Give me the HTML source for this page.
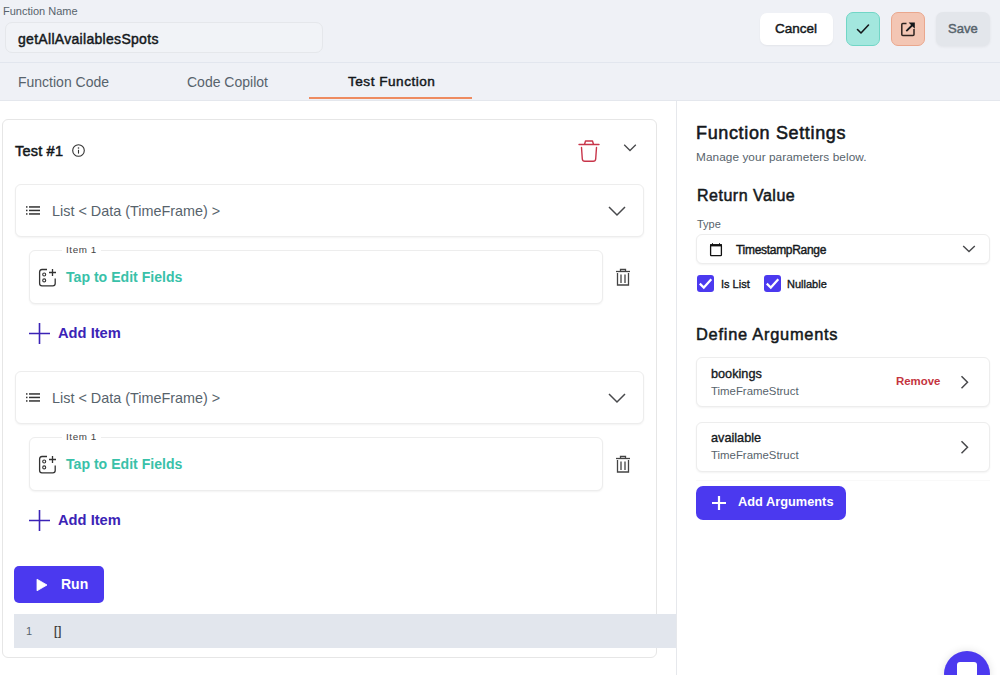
<!DOCTYPE html>
<html><head><meta charset="utf-8">
<style>
*{box-sizing:border-box;margin:0;padding:0}
html,body{width:1000px;height:675px;overflow:hidden;background:#fff;font-family:"Liberation Sans",sans-serif;color:#14181b}
.abs{position:absolute}
svg{position:absolute;overflow:visible}
#hdr{position:absolute;left:0;top:0;width:1000px;height:100px;background:#eff1f6}
#hdrline{position:absolute;left:0;top:62px;width:1000px;height:1px;background:#e2e6ee}
#tabline{position:absolute;left:0;top:100px;width:1000px;height:1px;background:#e4e7ed}
.txt{position:absolute;white-space:nowrap;line-height:1}
#fninput{position:absolute;left:5px;top:22px;width:318px;height:31px;background:#f1f3f7;border:1px solid #e5e7eb;border-radius:7px}
.btn{position:absolute;border-radius:7px}
#vdiv{position:absolute;left:676px;top:101px;width:1px;height:574px;background:#e6e8ec}
#card{position:absolute;left:2px;top:119px;width:655px;height:539px;border:1px solid #e6e6e6;border-radius:6px;background:#fff}
.box{position:absolute;border:1px solid #ededed;border-radius:6px;background:#fff;box-shadow:0 1px 2px rgba(0,0,0,0.05)}
.ilbl{position:absolute;background:#fff;padding:0 4px;font-size:9.8px;letter-spacing:0.6px;color:#444;line-height:1;white-space:nowrap}
</style></head>
<body>
<div id="hdr"></div>
<div id="hdrline"></div>
<div class="txt" style="left:3px;top:6px;font-size:11px;color:#57636c">Function Name</div>
<div id="fninput"></div>
<div class="txt" style="left:18px;top:32px;font-size:14px;-webkit-text-stroke:0.45px #14181b;letter-spacing:0.3px">getAllAvailablesSpots</div>

<div class="btn" style="left:760px;top:13px;width:73px;height:32px;background:#fff;box-shadow:0 1px 2px rgba(0,0,0,0.05)"></div>
<div class="txt" style="left:775px;top:22px;font-size:13.5px;-webkit-text-stroke:0.45px #14181b;letter-spacing:0px">Cancel</div>
<div class="btn" style="left:846px;top:12px;width:34px;height:34px;background:#a3e7de;border:1px solid #71d6c6"></div>
<svg style="left:846px;top:12px" width="34" height="34" viewBox="0 0 34 34"><path d="M11.5 17.5 L15 21 L22.5 13" fill="none" stroke="#14181b" stroke-width="1.6" stroke-linecap="round" stroke-linejoin="round"/></svg>
<div class="btn" style="left:891px;top:12px;width:34px;height:34px;background:#f3c6b4;border:1px solid #eaa78d"></div>
<svg style="left:891px;top:12px" width="34" height="34" viewBox="0 0 34 34"><path d="M15.5 11.4 H11.8 Q10.8 11.4 10.8 12.4 V22.4 Q10.8 23.4 11.8 23.4 H22 Q23 23.4 23 22.4 V17" fill="none" stroke="#2e2420" stroke-width="1.5"/><path d="M15.3 19.2 L21.5 13" stroke="#14181b" stroke-width="1.8"/><path d="M17.6 10.6 H23.8 V16.8 Z" fill="#14181b"/></svg>
<div class="btn" style="left:936px;top:12px;width:54px;height:34px;background:#e3e6eb;box-shadow:0 1px 3px rgba(0,0,0,0.06)"></div>
<div class="txt" style="left:948px;top:22px;font-size:13px;-webkit-text-stroke:0.45px #57636c;letter-spacing:0px;color:#57636c">Save</div>

<div class="txt" style="left:18px;top:75px;font-size:14px;color:#57636c">Function Code</div>
<div class="txt" style="left:187px;top:75px;font-size:14px;color:#57636c">Code Copilot</div>
<div class="txt" style="left:348px;top:75px;font-size:13.6px;-webkit-text-stroke:0.45px #14181b;letter-spacing:0.5px">Test Function</div>
<div class="abs" style="left:309px;top:97px;width:163px;height:2px;background:#ee8b60"></div>
<div id="tabline"></div>
<div id="vdiv"></div>

<div id="card"></div>
<div class="txt" style="left:15px;top:144px;font-size:14.5px;-webkit-text-stroke:0.5px #14181b;letter-spacing:0.2px">Test #1</div>
<svg style="left:72px;top:144px" width="13" height="13" viewBox="0 0 13 13"><circle cx="6.5" cy="6.5" r="5.8" fill="none" stroke="#333" stroke-width="1.1"/><circle cx="6.5" cy="4" r="0.8" fill="#333"/><path d="M6.5 5.8 V9.6" stroke="#333" stroke-width="1.1"/></svg>
<svg style="left:572px;top:135px" width="34" height="30" viewBox="0 0 34 30"><path d="M7 9.5 H27" stroke="#c8354a" stroke-width="1.4" stroke-linecap="round"/><path d="M12.5 9.5 L13.5 6 H20.5 L21.5 9.5" fill="none" stroke="#c8354a" stroke-width="1.4" stroke-linejoin="round"/><path d="M9.5 12.5 L10.3 24 Q10.5 26.3 12.8 26.3 H21.2 Q23.5 26.3 23.7 24 L24.5 12.5" fill="none" stroke="#c8354a" stroke-width="1.4" stroke-linecap="round"/></svg>
<svg style="left:620px;top:140px" width="20" height="14" viewBox="0 0 20 14"><path d="M4.2 4.8 L10 10.5 L15.8 4.8" fill="none" stroke="#48494c" stroke-width="1.3"/></svg>

<!-- block 1 -->
<div class="box" style="left:15px;top:184px;width:629px;height:53px"></div>
<svg style="left:24px;top:203px" width="18" height="14" viewBox="0 0 18 14"><g fill="#333"><rect x="2" y="3.2" width="1.5" height="1.5"/><rect x="2" y="6.7" width="1.5" height="1.5"/><rect x="2" y="10.2" width="1.5" height="1.5"/><rect x="5" y="3.2" width="11" height="1.5"/><rect x="5" y="6.7" width="11" height="1.5"/><rect x="5" y="10.2" width="11" height="1.5"/></g></svg>
<div class="txt" style="left:52px;top:204px;font-size:14.4px;color:#57636c">List &lt; Data (TimeFrame) &gt;</div>
<svg style="left:604px;top:200px" width="26" height="22" viewBox="0 0 26 22"><path d="M5 7 L13 15 L21 7" fill="none" stroke="#48494c" stroke-width="1.5"/></svg>
<div class="box" style="left:29px;top:250px;width:574px;height:54px;border-radius:6px"></div>
<div class="ilbl" style="left:62px;top:245px">Item 1</div>
<svg style="left:38px;top:268px" width="20" height="20" viewBox="0 0 20 20"><path d="M9 1.5 H4 Q1.6 1.5 1.6 4 V15.5 Q1.6 17.8 4 17.8 H14.8 Q17.2 17.8 17.2 15.5 V10.5" fill="none" stroke="#333" stroke-width="1.3"/><path d="M14.5 1 V8 M11 4.5 H18" stroke="#333" stroke-width="1.3"/><circle cx="6.2" cy="6.5" r="1.5" fill="none" stroke="#333" stroke-width="1.1"/><circle cx="6.2" cy="12.4" r="1.5" fill="none" stroke="#333" stroke-width="1.1"/></svg>
<div class="txt" style="left:66px;top:270px;font-size:14.1px;font-weight:bold;color:#39c1a9">Tap to Edit Fields</div>
<svg style="left:613px;top:267px" width="20" height="20" viewBox="0 0 20 20"><path d="M3 4.5 H17" stroke="#444" stroke-width="1.3"/><path d="M7.5 4.5 V2.5 H12.5 V4.5" fill="none" stroke="#444" stroke-width="1.3"/><path d="M4.5 6 V18 H15.5 V6 M8 7.5 V16 M12 7.5 V16" fill="none" stroke="#444" stroke-width="1.3"/></svg>
<svg style="left:29px;top:323px" width="21" height="21" viewBox="0 0 21 21"><path d="M10.5 0 V21 M0 10.5 H21" stroke="#3b23b6" stroke-width="1.6"/></svg>
<div class="txt" style="left:58px;top:326px;font-size:14.7px;font-weight:bold;color:#3b23b6">Add Item</div>

<!-- block 2 -->
<div class="box" style="left:15px;top:371px;width:629px;height:53px"></div>
<svg style="left:24px;top:390px" width="18" height="14" viewBox="0 0 18 14"><g fill="#333"><rect x="2" y="3.2" width="1.5" height="1.5"/><rect x="2" y="6.7" width="1.5" height="1.5"/><rect x="2" y="10.2" width="1.5" height="1.5"/><rect x="5" y="3.2" width="11" height="1.5"/><rect x="5" y="6.7" width="11" height="1.5"/><rect x="5" y="10.2" width="11" height="1.5"/></g></svg>
<div class="txt" style="left:52px;top:391px;font-size:14.4px;color:#57636c">List &lt; Data (TimeFrame) &gt;</div>
<svg style="left:604px;top:387px" width="26" height="22" viewBox="0 0 26 22"><path d="M5 7 L13 15 L21 7" fill="none" stroke="#48494c" stroke-width="1.5"/></svg>
<div class="box" style="left:29px;top:437px;width:574px;height:54px;border-radius:6px"></div>
<div class="ilbl" style="left:62px;top:432px">Item 1</div>
<svg style="left:38px;top:455px" width="20" height="20" viewBox="0 0 20 20"><path d="M9 1.5 H4 Q1.6 1.5 1.6 4 V15.5 Q1.6 17.8 4 17.8 H14.8 Q17.2 17.8 17.2 15.5 V10.5" fill="none" stroke="#333" stroke-width="1.3"/><path d="M14.5 1 V8 M11 4.5 H18" stroke="#333" stroke-width="1.3"/><circle cx="6.2" cy="6.5" r="1.5" fill="none" stroke="#333" stroke-width="1.1"/><circle cx="6.2" cy="12.4" r="1.5" fill="none" stroke="#333" stroke-width="1.1"/></svg>
<div class="txt" style="left:66px;top:457px;font-size:14.1px;font-weight:bold;color:#39c1a9">Tap to Edit Fields</div>
<svg style="left:613px;top:454px" width="20" height="20" viewBox="0 0 20 20"><path d="M3 4.5 H17" stroke="#444" stroke-width="1.3"/><path d="M7.5 4.5 V2.5 H12.5 V4.5" fill="none" stroke="#444" stroke-width="1.3"/><path d="M4.5 6 V18 H15.5 V6 M8 7.5 V16 M12 7.5 V16" fill="none" stroke="#444" stroke-width="1.3"/></svg>
<svg style="left:29px;top:510px" width="21" height="21" viewBox="0 0 21 21"><path d="M10.5 0 V21 M0 10.5 H21" stroke="#3b23b6" stroke-width="1.6"/></svg>
<div class="txt" style="left:58px;top:513px;font-size:14.7px;font-weight:bold;color:#3b23b6">Add Item</div>

<div class="btn" style="left:14px;top:566px;width:90px;height:37px;background:#4b39ef;border-radius:5px"></div>
<svg style="left:36px;top:578px" width="12" height="14" viewBox="0 0 12 14"><path d="M1 1.2 L11 7 L1 12.8 Z" fill="#fff" stroke="#fff" stroke-width="0.8" stroke-linejoin="round"/></svg>
<div class="txt" style="left:61px;top:577px;font-size:14px;font-weight:bold;color:#fff">Run</div>
<div class="abs" style="left:14px;top:614px;width:662px;height:34px;background:#e2e6ed"></div>
<div class="txt" style="left:26px;top:626px;font-size:11px;color:#57636c">1</div>
<div class="txt" style="left:54px;top:625px;font-size:12px;color:#333;letter-spacing:0.6px;-webkit-text-stroke:0.2px #333">[]</div>

<!-- right panel -->
<div class="txt" style="left:696px;top:124px;font-size:18px;-webkit-text-stroke:0.55px #14181b;letter-spacing:0.65px">Function Settings</div>
<div class="txt" style="left:696px;top:152px;font-size:11.8px;letter-spacing:0.07px;color:#57636c">Manage your parameters below.</div>
<div class="txt" style="left:697px;top:188px;font-size:16px;-webkit-text-stroke:0.5px #14181b;letter-spacing:0.5px">Return Value</div>
<div class="txt" style="left:697px;top:219px;font-size:11px;color:#57636c">Type</div>
<div class="box" style="left:696px;top:234px;width:294px;height:30px;border-radius:6px"></div>
<svg style="left:708px;top:242px" width="16" height="16" viewBox="0 0 16 16"><rect x="2.6" y="2.9" width="10.8" height="10.8" rx="0.8" fill="none" stroke="#111" stroke-width="1.3"/><rect x="2" y="2.2" width="12" height="2.2" fill="#111"/><rect x="4" y="1.2" width="1" height="1.5" fill="#111"/><rect x="11" y="1.2" width="1" height="1.5" fill="#111"/></svg>
<div class="txt" style="left:736px;top:244px;font-size:12px;-webkit-text-stroke:0.4px #14181b;letter-spacing:-0.3px">TimestampRange</div>
<svg style="left:959px;top:241px" width="20" height="16" viewBox="0 0 20 16"><path d="M4.2 5 L10 10.5 L15.8 5" fill="none" stroke="#48494c" stroke-width="1.4"/></svg>
<div class="abs" style="left:697px;top:275px;width:17px;height:17px;background:#4b39ef;border-radius:3px"></div>
<svg style="left:697px;top:275px" width="17" height="17" viewBox="0 0 17 17"><path d="M2.8 8.6 L6.8 12.6 L14.3 4.3" fill="none" stroke="#fff" stroke-width="2.2"/></svg>
<div class="txt" style="left:721px;top:279px;font-size:11px;-webkit-text-stroke:0.35px #14181b">Is List</div>
<div class="abs" style="left:764px;top:275px;width:17px;height:17px;background:#4b39ef;border-radius:3px"></div>
<svg style="left:764px;top:275px" width="17" height="17" viewBox="0 0 17 17"><path d="M2.8 8.6 L6.8 12.6 L14.3 4.3" fill="none" stroke="#fff" stroke-width="2.2"/></svg>
<div class="txt" style="left:787px;top:279px;font-size:11px;-webkit-text-stroke:0.35px #14181b">Nullable</div>

<div class="txt" style="left:696px;top:326px;font-size:16.4px;-webkit-text-stroke:0.5px #14181b;letter-spacing:0.75px">Define Arguments</div>
<div class="box" style="left:696px;top:357px;width:294px;height:50px"></div>
<div class="txt" style="left:711px;top:368px;font-size:12.7px;-webkit-text-stroke:0.35px #14181b">bookings</div>
<div class="txt" style="left:711px;top:386px;font-size:11.4px;color:#57636c">TimeFrameStruct</div>
<div class="txt" style="left:896px;top:376px;font-size:11.4px;font-weight:bold;color:#c4343e">Remove</div>
<svg style="left:955px;top:372px" width="20" height="20" viewBox="0 0 20 20"><path d="M6.5 4.2 L12.5 10.2 L6.5 16.2" fill="none" stroke="#48494c" stroke-width="1.5"/></svg>
<div class="box" style="left:696px;top:422px;width:294px;height:50px"></div>
<div class="txt" style="left:711px;top:432px;font-size:12.7px;-webkit-text-stroke:0.35px #14181b">available</div>
<div class="txt" style="left:711px;top:450px;font-size:11.4px;color:#57636c">TimeFrameStruct</div>
<svg style="left:955px;top:437px" width="20" height="20" viewBox="0 0 20 20"><path d="M6.5 4.2 L12.5 10.2 L6.5 16.2" fill="none" stroke="#48494c" stroke-width="1.5"/></svg>
<div class="abs" style="left:696px;top:480px;width:294px;height:1px;background:#f9f9f9"></div>
<div class="btn" style="left:696px;top:486px;width:150px;height:34px;background:#4b39ef;border-radius:7px"></div>
<svg style="left:711px;top:495px" width="16" height="16" viewBox="0 0 16 16"><path d="M8 1 V15 M1 8 H15" stroke="#fff" stroke-width="2.2"/></svg>
<div class="txt" style="left:738px;top:496px;font-size:12.8px;font-weight:bold;color:#fff">Add Arguments</div>

<!-- FAB -->
<div class="abs" style="left:944px;top:651px;width:46px;height:46px;border-radius:50%;background:#4b39ef;box-shadow:0 0 8px rgba(0,0,0,0.12)"></div>
<div class="abs" style="left:957px;top:662px;width:20px;height:20px;border-radius:3px;background:#fff"></div>
</body></html>
